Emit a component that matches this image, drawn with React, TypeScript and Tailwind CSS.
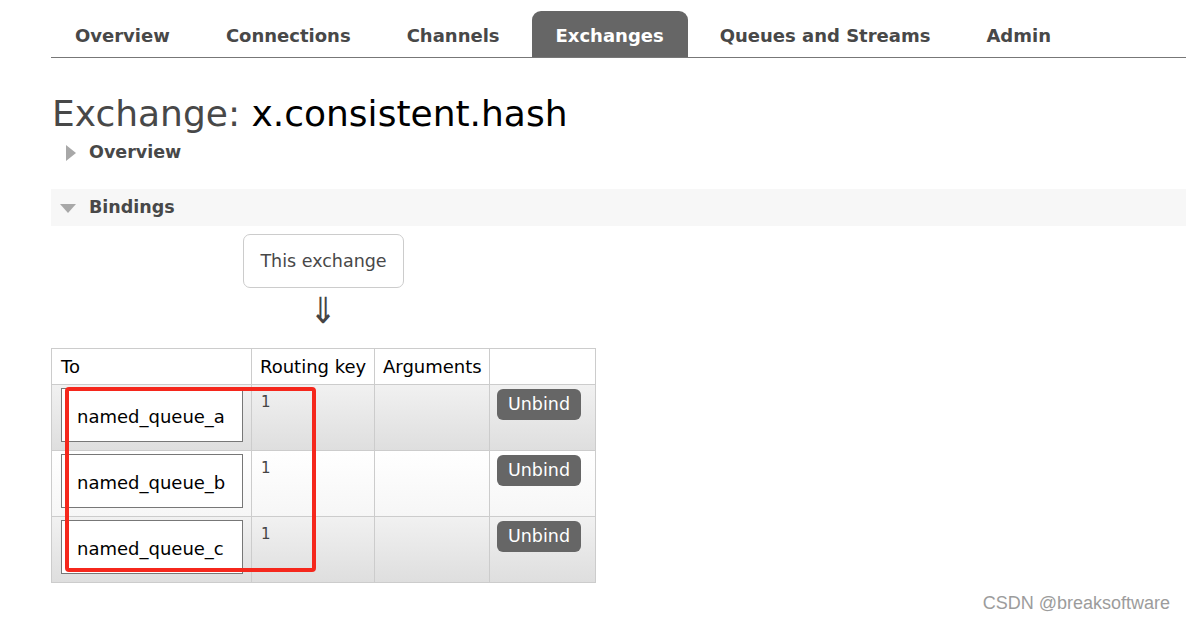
import React from "react";

const tabs = ["Overview", "Connections", "Channels", "Exchanges", "Queues and Streams", "Admin"];

const bindings = [
  { to: "named_queue_a", key: "1", alt: true },
  { to: "named_queue_b", key: "1", alt: false },
  { to: "named_queue_c", key: "1", alt: true },
];

const App: React.FC = () => {
  return (
    <div className="relative h-[619px] w-full overflow-hidden bg-white font-['DejaVu_Sans',Verdana,sans-serif] text-[#444]">
      {/* top nav */}
      <div className="ml-[51px] mt-[11px] flex gap-[8px] border-b border-[#777]">
        {tabs.map((t) => (
          <div
            key={t}
            className={`flex h-[46px] items-center rounded-t-[9px] px-6 pt-[3px] text-[18px] font-bold whitespace-nowrap ${
              t === "Exchanges" ? "bg-[#666] text-white" : "text-[#484848]"
            }`}
          >
            {t}
          </div>
        ))}
      </div>

      <h1 className="ml-[52px] mt-[34px] text-[36px] leading-[44px] font-normal text-[#484848]">
        Exchange: <span className="text-black">x.consistent.hash</span>
      </h1>

      {/* collapsed section */}
      <div className="ml-[51px] flex h-[32px] items-center pt-[1px]">
        <span className="ml-[15px] mr-[13px] block h-0 w-0 border-y-[8px] border-l-[10px] border-y-transparent border-l-[#a8a8a8]" />
        <span className="text-[17.5px] font-bold text-[#484848]">Overview</span>
      </div>

      {/* bindings section */}
      <div className="ml-[51px] mt-[21px] flex h-[37px] items-center bg-[#f7f7f7]">
        <span className="ml-[9px] mr-[13px] mt-[2px] block h-0 w-0 border-x-[8px] border-t-[9px] border-x-transparent border-t-[#a8a8a8]" />
        <span className="text-[17.5px] font-bold text-[#484848]">Bindings</span>
      </div>

      <div className="ml-[243px] mt-[8px] flex w-[161px] flex-col items-center">
        <div className="flex h-[54px] w-full items-center justify-center rounded-[7px] border border-[#ccc] text-[17.5px] text-[#484848]">
          This exchange
        </div>
        <div className="mt-[3px] h-[40px] text-[36px] leading-[40px] text-[#444] scale-x-90">⇓</div>
      </div>

      <div className="relative ml-[51px] mt-[17px] w-[545px]">
        <table className="w-full table-fixed border-collapse text-left text-[18px] text-black">
          <thead>
            <tr className="h-[36px] bg-white">
              <th className="w-[200px] whitespace-nowrap border border-[#ccc] px-[9px] font-normal">To</th>
              <th className="w-[123px] whitespace-nowrap border border-[#ccc] px-[8px] font-normal">Routing key</th>
              <th className="w-[115px] whitespace-nowrap border border-[#ccc] px-[8px] font-normal">Arguments</th>
              <th className="border border-[#ccc]"></th>
            </tr>
          </thead>
          <tbody>
            {bindings.map((b) => (
              <tr
                key={b.to}
                className={`h-[66px] ${
                  b.alt
                    ? "bg-gradient-to-b from-[#f1f1f1] to-[#dedede]"
                    : "bg-gradient-to-b from-[#ffffff] to-[#f6f6f6]"
                }`}
              >
                <td className="border border-[#ccc] pl-[9px] pr-[8px] pt-[3px] pb-[7px] align-top">
                  <div className="flex h-[54px] items-center whitespace-nowrap border border-[#777] bg-white pl-[15px] pt-[2px]">
                    {b.to}
                  </div>
                </td>
                <td className="border border-[#ccc] px-[9px] pt-[6px] align-top text-[15px] text-[#444]">
                  {b.key}
                </td>
                <td className="border border-[#ccc]"></td>
                <td className="border border-[#ccc] pl-[7px] pt-[4px] align-top">
                  <button className="flex h-[31px] w-[84px] items-center justify-center rounded-[6px] bg-[#666] text-[17.5px] text-white">
                    Unbind
                  </button>
                </td>
              </tr>
            ))}
          </tbody>
        </table>
        {/* red annotation box */}
        <div className="pointer-events-none absolute left-[14px] top-[39px] h-[185px] w-[251px] rounded-[4px] border-4 border-[#f5271c]" />
      </div>

      <div className="absolute right-[16px] top-[591px] font-['Liberation_Sans',Arial,sans-serif] text-[18px] leading-[24px] text-[#9c9c9c]">
        CSDN @breaksoftware
      </div>
    </div>
  );
};

export default App;
